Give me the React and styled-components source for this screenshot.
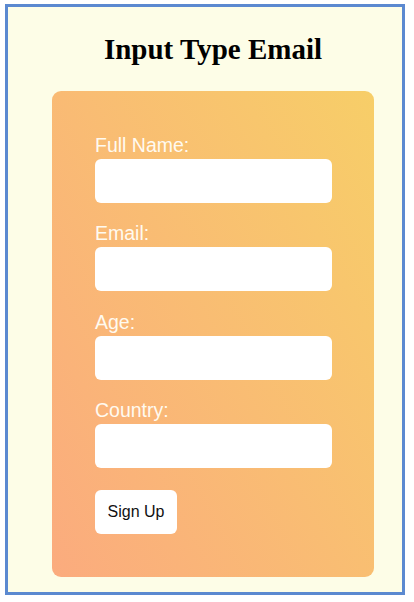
import React from 'react';
import styled, { createGlobalStyle } from 'styled-components';

const GlobalStyle = createGlobalStyle`
  body {
    margin: 0;
    background: #ffffff;
  }
`;

const Frame = styled.div`
  box-sizing: border-box;
  width: 400px;
  height: 591px;
  margin: 4px 0 0 5px;
  border: 3px solid #5b89d0;
  background: #fdfde7;
  padding: 26px 0 0 44px;
`;

const Column = styled.div`
  width: 322px;
  display: flex;
  flex-direction: column;
`;

const Title = styled.h1`
  margin: 0 0 25px;
  text-align: center;
  font-family: "Liberation Serif", "Times New Roman", serif;
  font-weight: bold;
  font-size: 29px;
  color: #000;
`;

const Card = styled.form`
  box-sizing: border-box;
  padding: 42.5px 42px 43px 43px;
  border-radius: 9px;
  background: linear-gradient(62deg, #fbab7e 0%, #f7ce68 100%);
  display: flex;
  flex-direction: column;
  gap: 19.5px;
`;

const Field = styled.div`
  display: flex;
  flex-direction: column;
  gap: 2px;
`;

const Label = styled.label`
  font-family: "Liberation Sans", Arial, sans-serif;
  font-size: 19.5px;
  color: #fffaf0;
`;

const Input = styled.input`
  box-sizing: border-box;
  width: 100%;
  height: 44px;
  border: none;
  border-radius: 6px;
  background: #ffffff;
  padding: 0 10px;
  font-family: "Liberation Sans", Arial, sans-serif;
  font-size: 16px;
  outline: none;
`;

const Button = styled.button`
  align-self: flex-start;
  box-sizing: border-box;
  height: 44px;
  margin-top: 2px;
  padding: 0 12.5px;
  border: none;
  border-radius: 6px;
  background: #ffffff;
  color: #111;
  font-family: "Liberation Sans", Arial, sans-serif;
  font-size: 16px;
  cursor: pointer;
`;

const fields = [
  { id: 'name', label: 'Full Name:', type: 'text' },
  { id: 'email', label: 'Email:', type: 'email' },
  { id: 'age', label: 'Age:', type: 'number' },
  { id: 'country', label: 'Country:', type: 'text' },
];

export default function App() {
  return (
    <>
      <GlobalStyle />
      <Frame>
        <Column>
          <Title>Input Type Email</Title>
          <Card onSubmit={(e) => e.preventDefault()}>
            {fields.map((f) => (
              <Field key={f.id}>
                <Label htmlFor={f.id}>{f.label}</Label>
                <Input id={f.id} type={f.type} />
              </Field>
            ))}
            <Button type="submit">Sign Up</Button>
          </Card>
        </Column>
      </Frame>
    </>
  );
}
